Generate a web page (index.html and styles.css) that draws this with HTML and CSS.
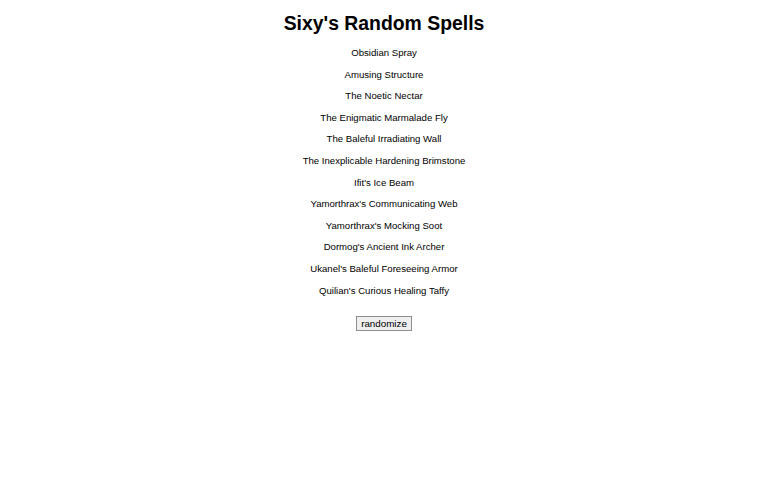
FILE: index.html
```html
<!DOCTYPE html>
<html>
<head>
<meta charset="utf-8">
<title>Sixy's Random Spells</title>
<link rel="stylesheet" href="styles.css">
</head>
<body>
<main class="page">
  <h1 class="title">Sixy's Random Spells</h1>
  <div class="spells">
    <p class="spell">Obsidian Spray</p>
    <p class="spell">Amusing Structure</p>
    <p class="spell">The Noetic Nectar</p>
    <p class="spell">The Enigmatic Marmalade Fly</p>
    <p class="spell">The Baleful Irradiating Wall</p>
    <p class="spell">The Inexplicable Hardening Brimstone</p>
    <p class="spell">Ifit's Ice Beam</p>
    <p class="spell">Yamorthrax's Communicating Web</p>
    <p class="spell">Yamorthrax's Mocking Soot</p>
    <p class="spell">Dormog's Ancient Ink Archer</p>
    <p class="spell">Ukanel's Baleful Foreseeing Armor</p>
    <p class="spell">Quilian's Curious Healing Taffy</p>
  </div>
  <button class="randomize" type="button">randomize</button>
</main>
</body>
</html>
```

FILE: styles.css
```css
html, body {
  margin: 0;
  background: #ffffff;
}

.page {
  padding: 12px 8px 0;
  text-align: center;
  font-family: "Liberation Sans", Arial, sans-serif;
  color: #000000;
}

.title {
  margin: 0;
  font-size: 19.4px;
  font-weight: bold;
  line-height: 23px;
}

.spells {
  margin-top: 12px;
}

.spell {
  margin: 10px 0;
  font-size: 9.6px;
  line-height: 11.6px;
}

.randomize {
  margin-top: 10px;
  padding: 1px 4px;
  font-family: "Liberation Sans", Arial, sans-serif;
  font-size: 9.8px;
  line-height: 11px;
  color: #000000;
  background: #efefef;
  border: 1px solid #8f8f8f;
  border-radius: 0;
}
```
